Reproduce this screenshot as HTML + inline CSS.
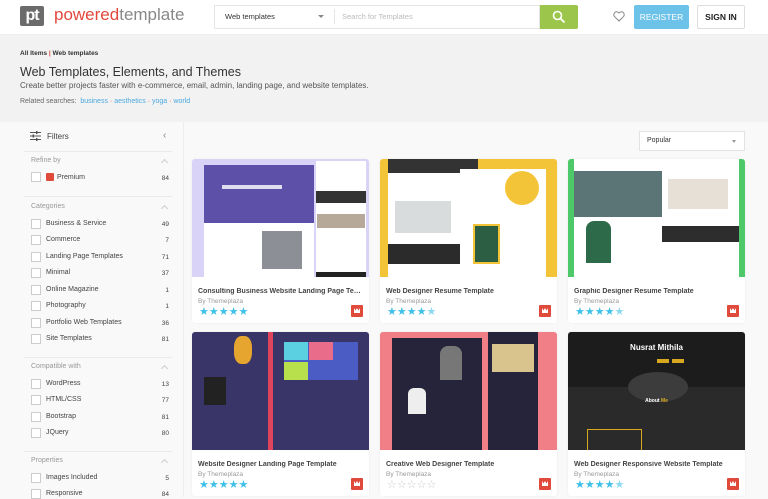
<!DOCTYPE html>
<html><head><meta charset="utf-8"><style>
*{box-sizing:border-box;margin:0;padding:0}
body{width:768px;height:497px;overflow:hidden;font-family:"Liberation Sans",sans-serif;background:#f9f9f9;color:#333;position:relative}
.abs{position:absolute}
.hdr{left:0;top:0;width:768px;height:35px;background:#fff;border-bottom:1px solid #eee}
.hero{left:0;top:35px;width:768px;height:87px;background:#f2f2f2}
.side{left:0;top:122px;width:184px;height:375px;background:#f9f9f9;border-right:1px solid #eee}
.cb{position:absolute;left:31px;width:10px;height:10px;border:1px solid #ccc;background:#fff}
.it{position:absolute;left:46px;font-size:7px;color:#444}
.n{position:absolute;right:14px;font-size:6.5px;color:#444}
.sec{position:absolute;left:31px;font-size:7px;color:#999}
.car{position:absolute;right:16px;width:5px;height:5px;border-left:1px solid #ccc;border-top:1px solid #ccc;transform:rotate(45deg)}
.hr{position:absolute;left:24px;width:148px;height:1px;background:#ebebeb}
.card{position:absolute;width:177px;height:164px;background:#fff;border-radius:3px;overflow:hidden;box-shadow:0 0 2px rgba(0,0,0,.06)}
.img{position:absolute;left:0;top:0;width:177px;height:118px;overflow:hidden}
.t{position:absolute;left:6px;top:129px;width:166px;overflow:hidden;text-overflow:ellipsis;font-size:7px;font-weight:bold;color:#444;white-space:nowrap}
.by{position:absolute;left:6px;top:139px;font-size:6.5px;color:#999}
.st{position:absolute;left:7px;top:146px;font-size:11px;color:#3ec0e8;letter-spacing:0px}
.cr{position:absolute;right:6px;top:146px;width:12px;height:12px;background:#e04a3a;border-radius:1px}
.cr:after{content:"";position:absolute;left:3px;top:3px;width:6px;height:5px;background:#fff;clip-path:polygon(0 0,25% 50%,50% 0,75% 50%,100% 0,100% 100%,0 100%)}
.b{position:absolute}
</style></head><body>
<div class="abs hdr"></div>
<div class="abs" style="left:20px;top:6px;width:24px;height:20px;background:#6b6b6b;border-radius:2px;color:#fff;font-weight:bold;font-size:16px;line-height:19px;text-align:center;letter-spacing:-1px">pt</div>
<div class="abs" style="left:54px;top:5px;font-size:17px;color:#e2483c">powered<span style="color:#888">template</span></div>
<div class="abs" style="left:214px;top:5px;width:326px;height:24px;border:1px solid #e5e5e5;background:#fff"></div>
<div class="abs" style="left:225px;top:12px;font-size:7.5px;color:#333">Web templates</div>
<div class="abs" style="left:318px;top:15px;border:3px solid transparent;border-top:3px solid #888"></div>
<div class="abs" style="left:334px;top:9px;width:1px;height:15px;background:#e5e5e5"></div>
<div class="abs" style="left:342px;top:12px;font-size:7.5px;color:#bbb">Search for Templates</div>
<div class="abs" style="left:540px;top:5px;width:38px;height:24px;background:#9cc64b;border-radius:0 2px 2px 0"></div>
<svg class="abs" style="left:552px;top:10px" width="14" height="14" viewBox="0 0 14 14"><circle cx="5.5" cy="5.5" r="4" fill="none" stroke="#fff" stroke-width="1.6"/><path d="M8.5 8.5L12.5 12.5" stroke="#fff" stroke-width="1.8"/></svg>
<svg class="abs" style="left:613px;top:11px" width="12" height="11" viewBox="0 0 12 11"><path d="M6 10L1.3 5.3A2.6 2.6 0 0 1 6 2 2.6 2.6 0 0 1 10.7 5.3Z" fill="none" stroke="#888" stroke-width="1"/></svg>
<div class="abs" style="left:634px;top:5px;width:55px;height:24px;background:#6cc2e8;border-radius:2px;color:#fff;font-size:8.5px;text-align:center;line-height:24px">REGISTER</div>
<div class="abs" style="left:697px;top:5px;width:48px;height:24px;border:1px solid #ddd;border-radius:2px;color:#222;font-size:8.5px;font-weight:bold;text-align:center;line-height:22px">SIGN IN</div>
<div class="abs hero"></div>
<div class="abs" style="left:20px;top:50px;font-size:6.5px;font-weight:bold;color:#333">All Items <span style="color:#e2483c">|</span> Web templates</div>
<div class="abs" style="left:20px;top:65px;font-size:12.5px;color:#333">Web Templates, Elements, and Themes</div>
<div class="abs" style="left:20px;top:81px;font-size:8px;color:#555">Create better projects faster with e-commerce, email, admin, landing page, and website templates.</div>
<div class="abs" style="left:20px;top:98px;font-size:7px;color:#666">Related searches: &nbsp;<span style="color:#4aa8df">business</span> <span style="color:#e2483c">·</span> <span style="color:#4aa8df">aesthetics</span> <span style="color:#e2483c">·</span> <span style="color:#4aa8df">yoga</span> <span style="color:#e2483c">·</span> <span style="color:#4aa8df">world</span></div>
<div class="abs side">
<svg style="position:absolute;left:30px;top:9px" width="11" height="10" viewBox="0 0 11 10"><path d="M0 1.5H11M0 5H11M0 8.5H11" stroke="#555" stroke-width="1"/><rect x="6" y="0" width="1.5" height="3" fill="#555"/><rect x="2.5" y="3.5" width="1.5" height="3" fill="#555"/><rect x="6" y="7" width="1.5" height="3" fill="#555"/></svg>
<div style="position:absolute;left:47px;top:10px;font-size:8px;color:#444">Filters</div>
<div style="position:absolute;left:163px;top:8px;font-size:10px;color:#888">‹</div>
<div class="hr" style="top:29px"></div>
<div class="sec" style="top:35px">Refine by</div><div class="car" style="top:38px"></div>
<div class="cb" style="top:50px"></div><div style="position:absolute;left:46px;top:51px;width:8px;height:8px;background:#e04a3a;border-radius:1px"></div><div class="it" style="left:57px;top:52px">Premium</div><div class="n" style="top:53px">84</div>
<div class="hr" style="top:74px"></div>
<div class="sec" style="top:81px">Categories</div><div class="car" style="top:84px"></div>
<div class="cb" style="top:97px"></div><div class="it" style="top:98px">Business &amp; Service</div><div class="n" style="top:99px">49</div>
<div class="cb" style="top:113px"></div><div class="it" style="top:114px">Commerce</div><div class="n" style="top:115px">7</div>
<div class="cb" style="top:130px"></div><div class="it" style="top:131px">Landing Page Templates</div><div class="n" style="top:132px">71</div>
<div class="cb" style="top:146px"></div><div class="it" style="top:147px">Minimal</div><div class="n" style="top:148px">37</div>
<div class="cb" style="top:163px"></div><div class="it" style="top:164px">Online Magazine</div><div class="n" style="top:165px">1</div>
<div class="cb" style="top:179px"></div><div class="it" style="top:180px">Photography</div><div class="n" style="top:181px">1</div>
<div class="cb" style="top:196px"></div><div class="it" style="top:197px">Portfolio Web Templates</div><div class="n" style="top:198px">36</div>
<div class="cb" style="top:212px"></div><div class="it" style="top:213px">Site Templates</div><div class="n" style="top:214px">81</div>
<div class="hr" style="top:235px"></div>
<div class="sec" style="top:241px">Compatible with</div><div class="car" style="top:244px"></div>
<div class="cb" style="top:257px"></div><div class="it" style="top:258px">WordPress</div><div class="n" style="top:259px">13</div>
<div class="cb" style="top:273px"></div><div class="it" style="top:274px">HTML/CSS</div><div class="n" style="top:275px">77</div>
<div class="cb" style="top:290px"></div><div class="it" style="top:291px">Bootstrap</div><div class="n" style="top:292px">81</div>
<div class="cb" style="top:306px"></div><div class="it" style="top:307px">JQuery</div><div class="n" style="top:308px">80</div>
<div class="hr" style="top:329px"></div>
<div class="sec" style="top:335px">Properties</div><div class="car" style="top:338px"></div>
<div class="cb" style="top:351px"></div><div class="it" style="top:352px">Images Included</div><div class="n" style="top:353px">5</div>
<div class="cb" style="top:367px"></div><div class="it" style="top:368px">Responsive</div><div class="n" style="top:369px">84</div>
</div>
<div class="abs" style="left:639px;top:131px;width:106px;height:20px;background:#fff;border:1px solid #e3e3e3"></div>
<div class="abs" style="left:647px;top:137px;font-size:7px;color:#333">Popular</div>
<div class="abs" style="left:732px;top:140px;border:2.5px solid transparent;border-top:3px solid #999"></div>

<div class="card" style="left:192px;top:159px"><div class="img" style="background:#d9d3f7">
<div class="b" style="left:12px;top:6px;width:110px;height:58px;background:#5c50a8"></div>
<div class="b" style="left:12px;top:64px;width:110px;height:54px;background:#fff"></div>
<div class="b" style="left:70px;top:72px;width:40px;height:38px;background:#8d8f96"></div>
<div class="b" style="left:124px;top:2px;width:50px;height:116px;background:#fff"></div>
<div class="b" style="left:124px;top:32px;width:50px;height:12px;background:#333"></div>
<div class="b" style="left:125px;top:55px;width:48px;height:14px;background:#b7a99a"></div>
<div class="b" style="left:124px;top:113px;width:50px;height:5px;background:#222"></div>
<div class="b" style="left:30px;top:26px;width:60px;height:4px;background:#fff;opacity:.8"></div>
</div><div class="t">Consulting Business Website Landing Page Template</div><div class="by">By Themeplaza</div><div class="st">★★★★★</div><div class="cr"></div></div>

<div class="card" style="left:380px;top:159px"><div class="img" style="background:#f4c438">
<div class="b" style="left:8px;top:0;width:90px;height:118px;background:#fff"></div>
<div class="b" style="left:8px;top:0;width:90px;height:14px;background:#333"></div>
<div class="b" style="left:8px;top:85px;width:90px;height:20px;background:#2b2b2b"></div>
<div class="b" style="left:15px;top:42px;width:56px;height:32px;background:#d9dcdc"></div>
<div class="b" style="left:80px;top:10px;width:86px;height:108px;background:#fff"></div>
<div class="b" style="left:125px;top:12px;width:34px;height:34px;border-radius:50%;background:#f4c438"></div>
<div class="b" style="left:93px;top:65px;width:27px;height:40px;background:#2c5e44;border:2px solid #f4c438"></div>
</div><div class="t">Web Designer Resume Template</div><div class="by">By Themeplaza</div><div class="st">★★★★<span style="opacity:.6">★</span></div><div class="cr"></div></div>

<div class="card" style="left:568px;top:159px"><div class="img" style="background:#4ec96a">
<div class="b" style="left:6px;top:0;width:165px;height:118px;background:#fff"></div>
<div class="b" style="left:6px;top:12px;width:88px;height:46px;background:#5b7476"></div>
<div class="b" style="left:18px;top:62px;width:25px;height:42px;background:#2d6a4a;border-radius:8px 8px 0 0"></div>
<div class="b" style="left:94px;top:67px;width:77px;height:16px;background:#2d2d2d"></div>
<div class="b" style="left:100px;top:20px;width:60px;height:30px;background:#e6e0d6"></div>
</div><div class="t">Graphic Designer Resume Template</div><div class="by">By Themeplaza</div><div class="st">★★★★<span style="opacity:.6">★</span></div><div class="cr"></div></div>

<div class="card" style="left:192px;top:332px"><div class="img" style="background:#3a3568">
<div class="b" style="left:76px;top:0;width:5px;height:118px;background:#e0435c"></div>
<div class="b" style="left:92px;top:10px;width:74px;height:38px;background:#4b5cc4"></div>
<div class="b" style="left:92px;top:10px;width:24px;height:18px;background:#5ad0e0"></div>
<div class="b" style="left:117px;top:10px;width:24px;height:18px;background:#e96c8a"></div>
<div class="b" style="left:92px;top:30px;width:24px;height:18px;background:#b7e04c"></div>
<div class="b" style="left:12px;top:45px;width:22px;height:28px;background:#222"></div>
<div class="b" style="left:42px;top:4px;width:18px;height:28px;background:#e6a52e;border-radius:40%"></div>
</div><div class="t">Website Designer Landing Page Template</div><div class="by">By Themeplaza</div><div class="st">★★★★★</div><div class="cr"></div></div>

<div class="card" style="left:380px;top:332px"><div class="img" style="background:#f07f88">
<div class="b" style="left:12px;top:6px;width:90px;height:112px;background:#25243a"></div>
<div class="b" style="left:108px;top:0;width:50px;height:118px;background:#25243a"></div>
<div class="b" style="left:60px;top:14px;width:22px;height:34px;background:#777;border-radius:8px 8px 0 0"></div>
<div class="b" style="left:28px;top:56px;width:18px;height:26px;background:#eee;border-radius:6px 6px 0 0"></div>
<div class="b" style="left:112px;top:12px;width:42px;height:28px;background:#d8c48c"></div>
</div><div class="t">Creative Web Designer Template</div><div class="by">By Themeplaza</div><div class="st" style="color:#ccc">☆☆☆☆☆</div><div class="cr"></div></div>

<div class="card" style="left:568px;top:332px"><div class="img" style="background:#1c1c1c">
<div class="b" style="left:0;top:55px;width:177px;height:63px;background:#2a2a2a"></div>
<div class="b" style="left:60px;top:40px;width:60px;height:30px;background:#3c3c3c;border-radius:50%"></div>
<div class="b" style="left:19px;top:97px;width:55px;height:21px;border:1px solid #d8a820;border-bottom:none"></div>
<div class="b" style="left:89px;top:27px;width:12px;height:4px;background:#d8a820"></div>
<div class="b" style="left:104px;top:27px;width:12px;height:4px;background:#d8a820"></div>
<div class="b" style="left:0;top:11px;width:177px;text-align:center;color:#fff;font-size:8px;font-weight:bold">Nusrat Mithila</div>
<div class="b" style="left:0;top:66px;width:177px;text-align:center;color:#fff;font-size:5px;font-weight:bold">About <span style="color:#d8a820">Me</span></div>
</div><div class="t">Web Designer Responsive Website Template</div><div class="by">By Themeplaza</div><div class="st">★★★★<span style="opacity:.6">★</span></div><div class="cr"></div></div>
</body></html>
